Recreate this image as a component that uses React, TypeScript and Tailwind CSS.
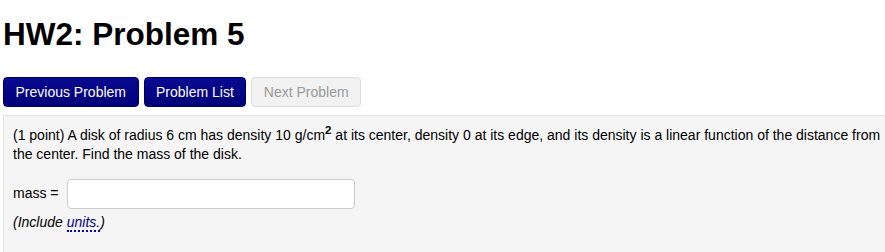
const navButton =
  "inline-block h-[30px] px-[11.5px] rounded-[4px] text-[14px] leading-[20px] border"

export default function App() {
  return (
    <div
      className="w-[885px] h-[252px] overflow-hidden bg-white text-black pl-[3px]"
      style={{ fontFamily: '"Liberation Sans", Arial, sans-serif' }}
    >
      <h1 className="mt-[17px] text-[31.5px] leading-[1.1] font-bold">
        HW2: Problem 5
      </h1>

      <div className="mt-[25px] flex gap-[5px]">
        <button className={`${navButton} text-white border-[#000060] bg-gradient-to-b from-[#0a0a92] to-[#00007a]`}>
          Previous Problem
        </button>
        <button className={`${navButton} text-white border-[#000060] bg-gradient-to-b from-[#0a0a92] to-[#00007a]`}>
          Problem List
        </button>
        <button className={`${navButton} text-[#999] border-[#dcdcdc] bg-[#f2f2f2]`} disabled>
          Next Problem
        </button>
      </div>

      <div className="mt-[8px] w-[900px] h-[200px] border border-[#e3e3e3] bg-[#f5f5f5] px-[9px] pt-[10px] text-[14px] leading-[19px]">
        <p>
          (1 point) A disk of radius 6 cm has density 10 g/cm
          <sup className="text-[11.5px] font-bold leading-none">2</sup> at its
          center, density 0 at its edge, and its density is a linear function
          of the distance from the center. Find the mass of the disk.
        </p>

        <div className="mt-[15px] flex items-center gap-[8px]">
          <span>mass =</span>
          <input
            type="text"
            className="w-[288px] h-[30px] bg-white border border-[#cccccc] rounded-[4px] px-[6px] outline-none"
          />
        </div>

        <p className="mt-[4px] italic">
          (Include{" "}
          <span className="text-[#00008b] border-b-2 border-dotted border-[#0000cc]">
            units.
          </span>
          )
        </p>
      </div>
    </div>
  )
}
